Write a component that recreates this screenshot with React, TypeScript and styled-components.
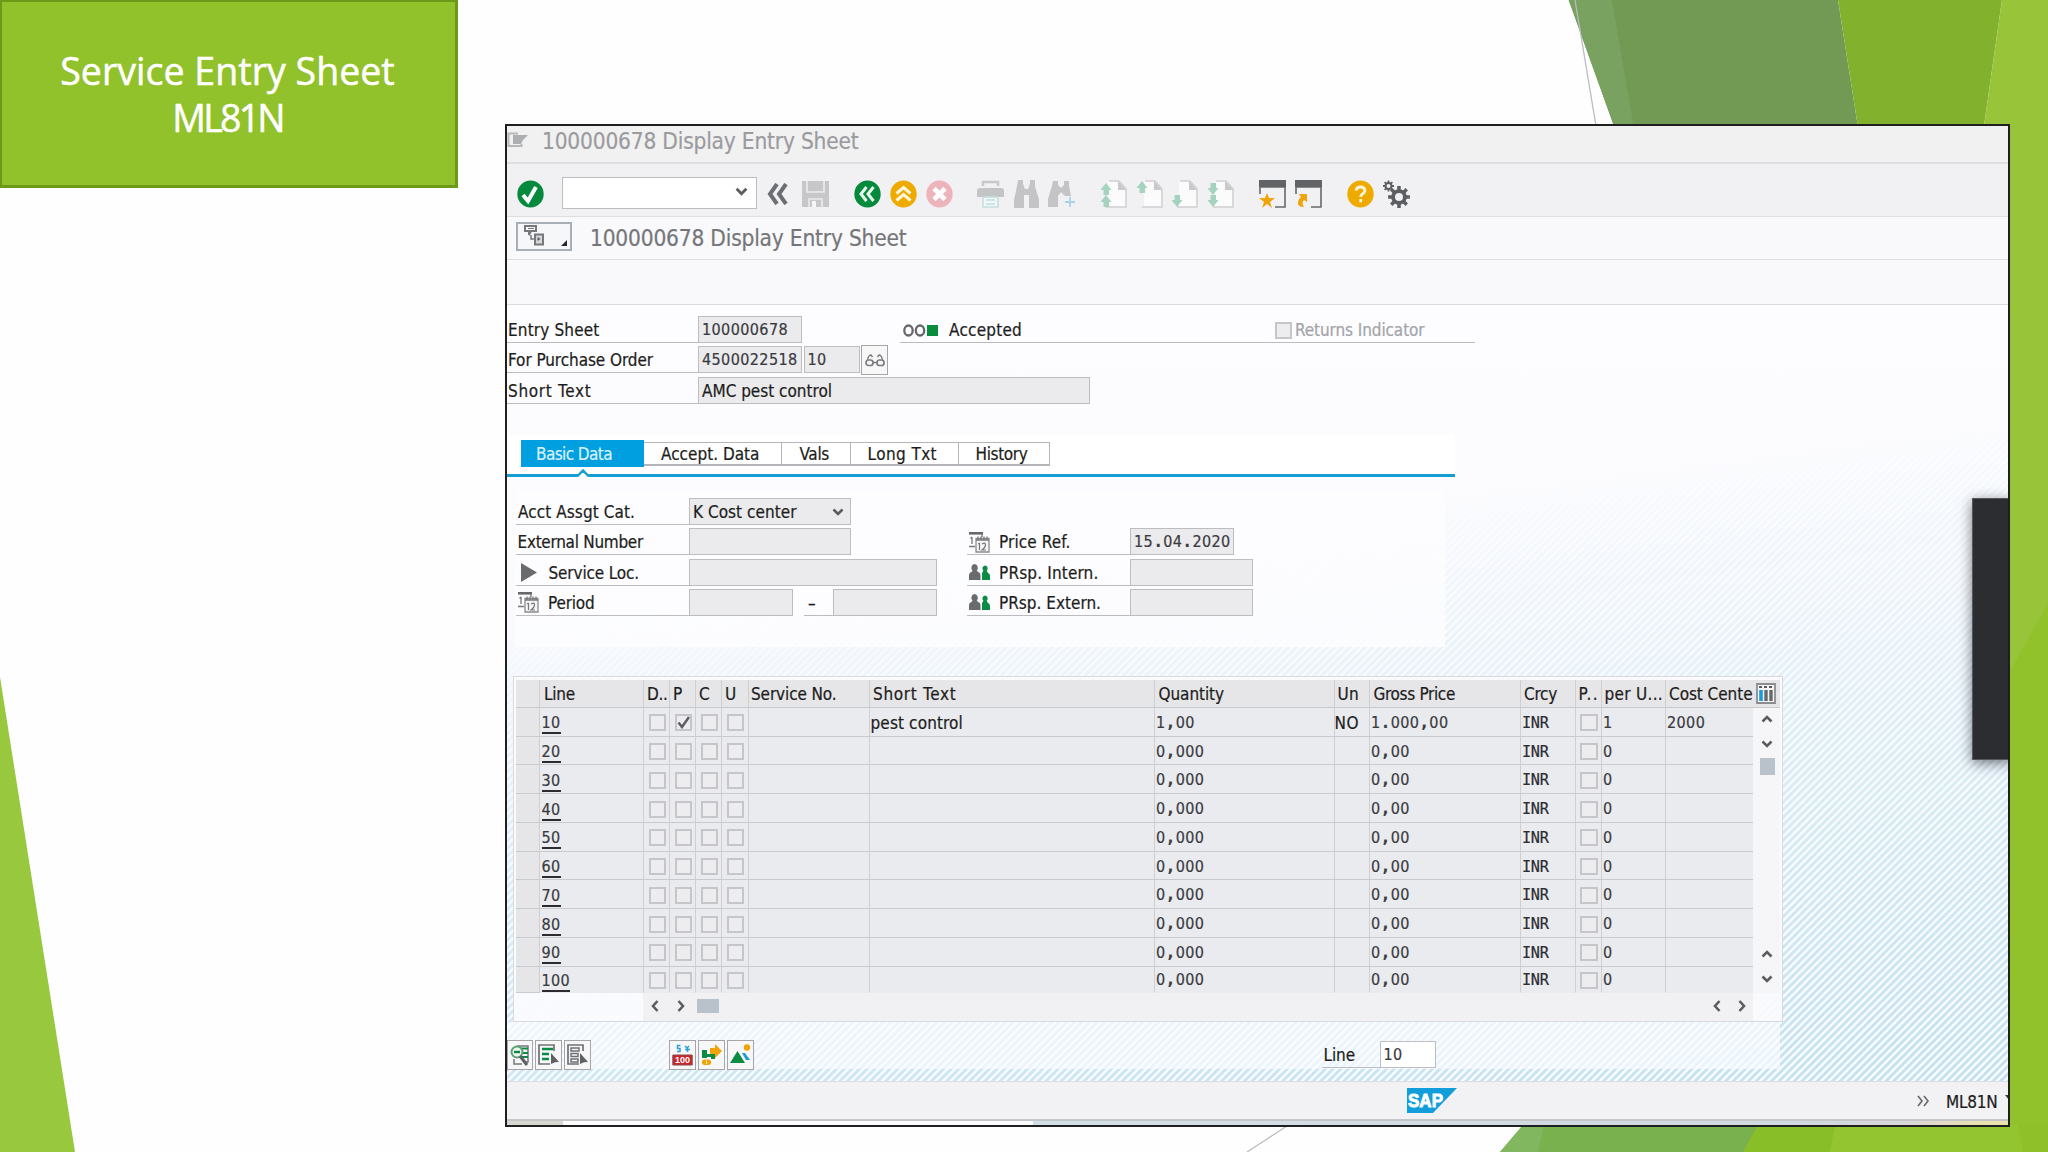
import React, { useLayoutEffect, useRef, useState } from 'react';
import styled, { createGlobalStyle, css } from 'styled-components';

const Global = createGlobalStyle`
  html, body { margin: 0; padding: 0; background: #fff; }
  *, *::before, *::after { box-sizing: border-box; }
`;

const sans = `'DejaVu Sans Condensed', 'DejaVu Sans', 'Noto Sans', sans-serif`;

/* ---------- slide ---------- */
const Slide = styled.main`
  position: relative;
  width: 2048px;
  height: 1152px;
  overflow: hidden;
  display: flex;
  align-items: flex-start;
  background: #fefefe;
  font-family: ${sans};
  font-stretch: condensed;
`;
const Backdrop = styled.svg`
  position: absolute;
  inset: 0;
`;
const Caption = styled.h1`
  position: relative;
  flex: none;
  width: 458px;
  height: 188px;
  margin: 0;
  padding: 2px 2px 0 0;
  display: flex;
  flex-direction: column;
  align-items: center;
  justify-content: center;
  background: #92c22b;
  border: solid #6b9a18;
  border-width: 2px 3px 3px 2px;
  color: #fff;
  font: 400 37.5px/46.5px 'Open Sans', 'Noto Sans', sans-serif;
  -webkit-text-stroke: 0.5px #fff;
`;

/* ---------- window ---------- */
const Window = styled.section`
  position: relative;
  flex: none;
  width: 1505px;
  height: 1003px;
  margin: 124px 0 0 47px;
  border: 2px solid #1f1f22;
  background: #f1f1f3;
  display: flex;
  flex-direction: column;
  overflow: hidden;
  color: #1d1d20;
  font-size: 17px;
  -webkit-text-stroke: 0.2px currentColor;
`;
const TitleBar = styled.header`
  flex: none;
  height: 38px;
  display: flex;
  align-items: flex-start;
  border-bottom: 2px solid #dededf;
  background: #f1f1f1;
  color: #9a9b9e;
  font-size: 22.5px;
  line-height: 30px;
`;
const MainTools = styled.nav`
  flex: none;
  height: 53px;
  display: flex;
  align-items: center;
  padding: 7px 0 0 10px;
  border-bottom: 1px solid #dfdfe2;
`;
const Tool = styled.span<{ $gap: number }>`
  display: flex;
  margin-left: ${p => p.$gap}px;
`;
const CommandBox = styled.div`
  width: 195px;
  height: 32px;
  margin: -2px 0 0 18px;
  padding: 0 8px 2px 0;
  display: flex;
  align-items: center;
  justify-content: flex-end;
  background: #fff;
  border: 1px solid #bdbdc2;
`;
const SubTitle = styled.div`
  flex: none;
  height: 43px;
  display: flex;
  align-items: flex-start;
  padding: 5px 0 0 9px;
  background: #f9f9fb;
  border-bottom: 1px solid #dedee1;
  color: #75767a;
  font-size: 22.5px;
  line-height: 32px;
`;
const MenuButton = styled.button`
  width: 56px;
  height: 29px;
  margin: 0 18px 0 0;
  padding: 3px 3px 3px 5px;
  display: flex;
  align-items: flex-end;
  justify-content: space-between;
  background: #f6f7f9;
  border: 2px solid #a9afb6;
`;
const AppTools = styled.div`
  flex: none;
  height: 45px;
  background: #f9f8fb;
  border-bottom: 1px solid #dcdce0;
`;
const Body = styled.div`
  position: relative;
  flex: none;
  height: 776px;
  display: flex;
  flex-direction: column;
  align-items: flex-start;
  background: linear-gradient(180deg, #fdfdff 0%, #fbfbfe 35%, #f5f9fd 60%, #eff6fc 100%);
  &::before {
    content: '';
    position: absolute;
    inset: 0;
    background: repeating-linear-gradient(135deg, #c5e1ef 0 2.2px, #fafdff 3px 4.6px, #c5e1ef 5.4px);
    mask-image: linear-gradient(172deg, transparent 32%, rgba(0, 0, 0, 0.45) 60%, #000 100%);
  }
  > * { position: relative; }
`;

/* ---------- form parts ---------- */
const EntryForm = styled.div`
  height: 130px;
  padding-top: 11px;
`;
const Row = styled.div`
  display: flex;
  align-items: flex-start;
  height: 27px;
  margin-bottom: 3.25px;
`;
const Label = styled.label<{ $w: number; $pad?: number }>`
  flex: none;
  width: ${p => p.$w}px;
  height: 27px;
  padding: 2px 0 0 ${p => p.$pad ?? 1}px;
  display: flex;
  align-items: center;
  border-bottom: 1.5px solid #bcbcc0;
  line-height: 26px;
`;
const Field = styled.div<{ $w: number; $white?: boolean; $gap?: number }>`
  flex: none;
  width: ${p => p.$w}px;
  height: 27px;
  margin-left: ${p => p.$gap ?? 0}px;
  padding: 1px 0 0 3px;
  display: flex;
  align-items: center;
  background: ${p => (p.$white ? '#fff' : '#ebebed')};
  border: 1.5px solid #bdbdc1;
  line-height: 24px;
`;
const IconButton = styled.button<{ $w?: number; $h?: number; $gap?: number }>`
  flex: none;
  width: ${p => p.$w ?? 27}px;
  height: ${p => p.$h ?? 30}px;
  margin: 0 0 0 ${p => p.$gap ?? 0}px;
  padding: 0;
  display: flex;
  align-items: center;
  justify-content: center;
  background: #f7f7f8;
  border: 1.5px solid #a5a5aa;
`;
const LensButton = styled(IconButton)`
  margin-top: -1.500px;
`;
const StatusLine = styled.div`
  width: 575px;
  height: 27px;
  margin-left: 98px;
  padding: 2px 0 0 3px;
  display: flex;
  align-items: center;
  border-bottom: 1.5px solid #bcbcc0;
`;
const Muted = styled.span`
  display: flex;
  align-items: center;
  gap: 3px;
  margin-left: 253px;
  color: #a3a4a8;
`;
const Check = styled.span<{ $s?: number }>`
  flex: none;
  width: ${p => p.$s ?? 17}px;
  height: 17px;
  display: flex;
  align-items: center;
  justify-content: center;
  border: 2px solid #c5c5ca;
  background: #ededf0;
`;
const TabStrip = styled.div`
  width: 948px;
  height: 42px;
  padding: 5px 0 0 14px;
  display: flex;
  align-items: flex-start;
  background: #fff;
  border-bottom: 3px solid #149ed6;
`;
const Notch = styled.svg`
  position: absolute;
  left: 69px;
  bottom: -3px;
`;
const Tab = styled.div<{ $w: number; $pad: number; $active?: boolean }>`
  width: ${p => p.$w}px;
  padding-left: ${p => p.$pad}px;
  ${p =>
    p.$active
      ? css`
          height: 27px;
          line-height: 28px;
          background: #009fe0;
          color: #d9f1fb;
        `
      : css`
          height: 24px;
          margin-top: 2px;
          line-height: 23px;
          background: #fff;
          border: solid #b4b4b9;
          border-width: 1px 1px 2px 0;
        `}
`;
const Panel = styled.div`
  width: 930px;
  height: 157px;
  margin: 13px 0 0 8px;
  padding: 8px 0 0 1px;
  display: flex;
  background: rgba(253, 253, 255, 0.86);
`;
const Column = styled.div<{ $gap?: number; $top?: number }>`
  margin-left: ${p => p.$gap ?? 0}px;
  padding-top: ${p => p.$top ?? 0}px;
`;
const IconSlot = styled.span<{ $w: number }>`
  flex: none;
  display: flex;
  width: ${p => p.$w}px;
`;
const Spread = styled.span<{ $w: number }>`
  width: ${p => p.$w}px;
`;

/* ---------- table ---------- */
const TableBox = styled.div`
  width: 1270px;
  height: 346px;
  margin: 29px 0 0 6px;
  padding: 3px 2px 0 2px;
  background: rgba(251, 251, 253, 0.92);
  border: 1px solid #dadade;
`;
const columns = '24px 104px 26px 26px 26px 26.5px 121.5px 285px 179.5px 35.5px 151px 54.5px 26.5px 64px 87.5px';
const TableMain = styled.div`
  display: flex;
  height: 313px;
`;
const Grid = styled.div`
  width: 1237px;
`;
const Line = styled.div<{ $head?: boolean; $last?: boolean }>`
  display: grid;
  grid-template-columns: ${columns};
  height: ${p => (p.$head ? 27.9 : p.$last ? 26.25 : 28.76)}px;
  background: ${p => (p.$head ? '#e6e5e7' : '#e9ebef')};
  line-height: 28px;
`;
const Cell = styled.div<{ $pad?: number; $shade?: boolean; $last?: boolean; $clip?: boolean }>`
  min-width: 0;
  padding: 2px 0 0 ${p => p.$pad ?? 1}px;
  display: flex;
  align-items: center;
  overflow: hidden;
  white-space: nowrap;
  border-right: 1.5px solid ${p => (p.$clip ? 'transparent' : '#cfcfd3')};
  border-bottom: 1px solid ${p => (p.$last ? 'transparent' : '#c9cacd')};
  background: ${p => (p.$shade ? '#e6e5e7' : 'transparent')};
`;
const Underlined = styled.span`
  height: 23px;
  line-height: 22px;
  border-bottom: 2px solid #2c2c30;
`;
const Rail = styled.div`
  width: 27px;
  display: flex;
  flex-direction: column;
  align-items: center;
  background: #f6f6f8;
`;
const RailHead = styled.div`
  width: 27px;
  height: 27.9px;
  padding: 3px 0 0 3px;
  background: #e6e5e7;
  border-bottom: 1px solid #c9cacd;
`;
const Thumb = styled.div<{ $w: number; $h: number; $gap?: number }>`
  width: ${p => p.$w}px;
  height: ${p => p.$h}px;
  margin-left: ${p => p.$gap ?? 0}px;
  background: #b9c2cb;
`;
const Stack = styled.div<{ $top: number }>`
  display: flex;
  flex-direction: column;
  align-items: center;
  gap: 13.5px;
  padding-top: ${p => p.$top}px;
`;
const HScroll = styled.div`
  display: flex;
  align-items: center;
  gap: 13.5px;
  width: 1110px;
  height: 28px;
  margin-left: 127px;
  padding: 0 5px 2px 6px;
  background: #f1f1f3;
`;
const Filler = styled.span`
  flex: 1;
`;

/* ---------- bottom ---------- */
const FootTools = styled.div`
  width: 1273px;
  height: 47px;
  padding-top: 17.500px;
  display: flex;
  align-items: flex-start;
  gap: 2px;
  background: rgba(250, 252, 255, 0.68);
`;
const LineEntry = styled.div`
  display: flex;
  margin: 1px 0 0 566px;
`;
const StatusBar = styled.footer`
  flex: none;
  height: 38px;
  display: flex;
  align-items: center;
  padding: 0 0 0 899.500px;
  border-top: 1px solid #dcdde0;
  background: #f2f1f3;
`;
const StatusText = styled.span`
  padding-top: 2px;
`;
const Divider = styled.span`
  width: 2px;
  height: 17px;
  margin: 0 8px 0 9px;
  background: #c6c6ca;
`;
const TaskStrip = styled.div`
  flex: 1;
  display: flex;
  border-top: 2px solid #c5c6c9;
`;
const TaskPart = styled.span<{ $w?: number; $bg: string }>`
  ${p => (p.$w ? `width: ${p.$w}px;` : 'flex: 1;')}
  background: ${p => p.$bg};
`;
const SideHandle = styled.div`
  position: absolute;
  left: 1465px;
  top: 372px;
  width: 40px;
  height: 262px;
  background: #2b2d31;
  border: 1px solid #55575b;
  box-shadow: 0 3px 12px rgba(30, 32, 40, 0.6);
`;

/* Tracks the text so that it spans the given width. */
const Tracked = styled.span`
  display: inline-block;
  white-space: pre;
`;
function Txt({ w, children }: { w: number; children: string }) {
  const ref = useRef<HTMLSpanElement>(null);
  const [track, setTrack] = useState(0);
  useLayoutEffect(() => {
    if (ref.current) setTrack((w + 1.5 - ref.current.getBoundingClientRect().width) / children.length);
  }, [w, children]);
  return (
    <Tracked ref={ref} style={{ letterSpacing: track }}>
      {children}
    </Tracked>
  );
}

/* Fixed-pitch figures: punctuation is padded to the digit width. */
const Figures = styled.span`
  font-size: 16px;
  letter-spacing: 0.4px;
  color: #3a3a40;
  white-space: pre;
`;
const Point = styled.span`
  padding: 0 2.3px;
  font-weight: 700;
  letter-spacing: 0;
`;
const Code = styled.span`
  font-family: 'DejaVu Sans Mono', monospace;
  font-size: 15.2px;
  letter-spacing: -0.3px;
  color: #2b2b30;
`;
function Num({ children }: { children: string }) {
  return (
    <Figures>
      {children.split(/([.,])/).map((s, i) => (s === '.' || s === ',' ? <Point key={i}>{s}</Point> : s))}
    </Figures>
  );
}

/* ---------- icons ---------- */
function Chevron({ dir, s = 12 }: { dir: 'up' | 'down' | 'left' | 'right'; s?: number }) {
  const d = {
    up: 'M1.5 8.5L6 4l4.500 4.500',
    down: 'M1.5 3.500L6 8l4.500-4.500',
    left: 'M8.500 1L4 6l4.500 5',
    right: 'M3.500 1L8 6l-4.500 5',
  }[dir];
  return (
    <svg width={s} height={s} viewBox="0 0 12 12">
      <path d={d} fill="none" stroke="#5b5c60" strokeWidth="2.600" />
    </svg>
  );
}
function Disc({ fill, children }: { fill: string; children: React.ReactNode }) {
  return (
    <svg width="27" height="28" viewBox="0 0 27 28">
      <ellipse cx="13.5" cy="14" rx="13.2" ry="13.6" fill={fill} />
      {children}
    </svg>
  );
}
const Printer = () => (
  <svg width="27" height="28" viewBox="0 0 27 28" fill="none">
    <path d="M6 6V2h15v4" stroke="#c8c8ca" strokeWidth="2.500" />
    <path d="M3 8h21q3 0 3 3v6H0v-6q0-3 3-3z" fill="#c4c4c6" />
    <path d="M6 17h15v10H6z" fill="#f3f6f6" stroke="#c2dedd" strokeWidth="1.500" />
    <path d="M9 20h9M9 24h9" stroke="#bfe0e4" strokeWidth="1.600" />
  </svg>
);
const Binoculars = ({ plus }: { plus?: boolean }) => (
  <svg width="27" height="28" viewBox="0 0 27 28">
    <path
      d={
        plus
          ? 'M5 1h5v4l3 3 3-3V1h5v5l2 10h-6l-4-4-3 4v11H0V19L4 6z'
          : 'M4 0h5v4l2 5h3l2-5V0h5v6l4 14v8H15V15h-5v13H0v-8L3 6z'
      }
      fill="#c4c4c7"
    />
    {plus && <path d="M22 17v10M17 22h10" stroke="#a9d3ec" strokeWidth="1.800" />}
  </svg>
);
const Sheet = ({ arrows }: { arrows: string }) => (
  <svg width="26" height="28" viewBox="0 0 26 28">
    <path d="M7 1h11l7 8v18H7z" fill="#fbfbfc" />
    <path d="M8 1h10l7 8v18H5" fill="none" stroke="#cfcfd2" strokeWidth="1.500" />
    <path d="M17 1v9h8z" fill="#c9c9cc" />
    <path d={arrows} fill="#a5d3bf" />
  </svg>
);
const upArrow = (y: number) => `M5 ${y}l5.500 7H8v5H2.500v-5H-.5z`;
const downArrow = (y: number) => `M5 ${y + 12}l5.500-7H8V${y}H2.500v5H-.5z`;
const Frame = ({ children }: { children: React.ReactNode }) => (
  <svg width="27" height="28" viewBox="0 0 27 28">
    <path d="M1 7h25v20H16M1 7v7" fill="none" stroke="#66686b" strokeWidth="1.600" />
    <path d="M0 0h27v7H0z" fill="#616366" />
    {children}
  </svg>
);
const Calendar = () => (
  <svg width="21" height="21" viewBox="0 0 21 21" fill="none">
    <path d="M0 1.300h14" stroke="#67686b" strokeWidth="2.600" />
    <path d="M13 2v3M0 14.500h6M3 5v7M1.500 6.500L3 5" stroke="#77787b" strokeWidth="1.300" />
    <path d="M7 6.500h13V20H7z" fill="#f5f5f6" stroke="#8a8b8e" strokeWidth="1.300" />
    <path d="M7 8h13M9 4.500v3M12 4.500v3M15 4.500v3M18 4.500v3" stroke="#77787b" strokeWidth="1.300" />
    <path d="M10.500 11v7M9.200 12l1.300-1M13 12q3.500-2 3.500.7T13 18h4" stroke="#77787b" strokeWidth="1.200" />
  </svg>
);
const People = () => (
  <svg width="21" height="18" viewBox="0 0 21 18">
    <path d="M5.500 0a3.600 3.600 0 0 1 2.200 6.200L9 8q2.500 .5 2.500 3v5H0v-5q0-2.500 2.500-3l1-1.800A3.600 3.600 0 0 1 5.500 0z" fill="#6a6b6e" />
    <path d="M16 1.500a3 3 0 0 1 1.700 5.200L19 9q2 .5 2 3v4h-8v-7l1.400-2.300A3 3 0 0 1 16 1.500z" fill="#0a8c45" />
  </svg>
);
const Gear = ({ cx, cy, r, hole }: { cx: number; cy: number; r: number; hole: number }) => (
  <g stroke="#5c5e61" fill="none">
    <circle cx={cx} cy={cy} r={(r + hole) / 2} strokeWidth={r - hole} />
    {[0, 45, 90, 135].map(a => (
      <path
        key={a}
        d={`M${cx} ${cy - r - r * 0.4}v${r * 0.7}M${cx} ${cy + r + r * 0.4}v${-r * 0.7}`}
        strokeWidth={r * 0.45}
        transform={`rotate(${a} ${cx} ${cy})`}
      />
    ))}
  </g>
);
const DocPick = ({ green }: { green?: boolean }) => (
  <svg width="21" height="22" viewBox="0 0 21 22" fill="none">
    <path d="M16 7V1H1v19h11" stroke="#707175" strokeWidth="1.700" />
    {green ? (
      <path d="M4 5h11M4 10h7M4 15h7" stroke="#0a8c45" strokeWidth="2.500" />
    ) : (
      <path d="M4 4h8v3H4zM4 9.500h7v3H4zM4 15h7v3H4z" stroke="#707175" strokeWidth="1.500" />
    )}
    <path d="M13 9l8 9-4 .2L13 20z" fill="#5f6064" />
  </svg>
);

const lines = [10, 20, 30, 40, 50, 60, 70, 80, 90, 100];

export default function App() {
  return (
    <Slide>
      <Global />
      <Backdrop width="2048" height="1152" viewBox="0 0 2048 1152">
        <path d="M1568.700 0H1838L1860 140H1619z" fill="#739a54" />
        <path d="M1568.700 0H1612L1636 140H1619z" fill="#79a15f" />
        <path d="M1838 0H2002L1982 140H1860z" fill="#82b22d" />
        <path d="M2002 0H2048V700H1990L1982 140z" fill="#98c43a" />
        <path d="M2048 603V1152H1990V707z" fill="#92c22b" />
        <path d="M1500 1152L1523 1125H1770V1152z" fill="#7ab14f" />
        <path d="M1500 1152L1523 1125H1544L1538 1152z" fill="#80b75f" />
        <path d="M1743 1152L1758 1125H2048V1152z" fill="#88bf28" />
        <path d="M1830 1152L1835 1125H2048V1152z" fill="#93c530" />
        <path d="M2018 1125H2048V1152H2023z" fill="#8fc029" />
        <path d="M1575 0L1596 126M1287 1126L1247 1152" stroke="#b9bcc0" strokeWidth="1.300" />
        <path d="M0 677L75 1152H0z" fill="#98c83e" />
      </Backdrop>
      <Caption>
        <Txt w={333}>Service Entry Sheet</Txt>
        <Txt w={109}>ML81N</Txt>
      </Caption>

      <Window>
        <TitleBar>
          <Tool $gap={0}>
            <svg width="35" height="31" viewBox="0 0 35 31">
              <path d="M11 7.500H1.500v12.500h13v-2" fill="none" stroke="#b7b8ba" strokeWidth="2" />
              <path d="M6 9h15l-5 5-2 4H6z" fill="#aeafb2" />
            </svg>
          </Tool>
          <Txt w={315}>100000678 Display Entry Sheet</Txt>
        </TitleBar>

        <MainTools>
          <Tool $gap={0}>
            <Disc fill="#058a3d">
              <path d="M6 15l5 6 8-14" fill="none" stroke="#fff" strokeWidth="4" />
            </Disc>
          </Tool>
          <CommandBox>
            <Chevron dir="down" s={13} />
          </CommandBox>
          <Tool $gap={10}>
            <svg width="21" height="22" viewBox="0 0 21 22">
              <path d="M10 1L3 11l7 10M19 1l-7 10 7 10" fill="none" stroke="#6c6e72" strokeWidth="4" />
            </svg>
          </Tool>
          <Tool $gap={14}>
            <svg width="27" height="28" viewBox="0 0 27 28">
              <path d="M0 1h27v26H0z" fill="#c7c7c9" />
              <path d="M5 1v11h17V1M7 27v-8h13v8" fill="none" stroke="#ececed" strokeWidth="1.600" />
              <path d="M10 21h4v6h-4z" fill="#f6f6f6" />
            </svg>
          </Tool>
          <Tool $gap={25.300}>
            <Disc fill="#058a3d">
              <path d="M12.500 7L7 14l5.500 7M19.500 7L14 14l5.500 7" fill="none" stroke="#e8f6ec" strokeWidth="3" />
            </Disc>
          </Tool>
          <Tool $gap={8.600}>
            <Disc fill="#efaa00">
              <path d="M6.500 13.500l7-6 7 6M6.500 20.500l7-6 7 6" fill="none" stroke="#fff6dc" strokeWidth="3" />
            </Disc>
          </Tool>
          <Tool $gap={8.800}>
            <Disc fill="#ecb4ba">
              <path d="M8 8.500l11 11M19 8.500l-11 11" stroke="#fff" strokeWidth="4.600" />
            </Disc>
          </Tool>
          <Tool $gap={24.500}>
            <Printer />
          </Tool>
          <Tool $gap={10}>
            <Binoculars />
          </Tool>
          <Tool $gap={7}>
            <Binoculars plus />
          </Tool>
          <Tool $gap={26.200}>
            <Sheet arrows={upArrow(3) + upArrow(15)} />
          </Tool>
          <Tool $gap={10}>
            <Sheet arrows={upArrow(1)} />
          </Tool>
          <Tool $gap={8.700}>
            <Sheet arrows={downArrow(15)} />
          </Tool>
          <Tool $gap={10.300}>
            <Sheet arrows={downArrow(3) + downArrow(15)} />
          </Tool>
          <Tool $gap={25}>
            <Frame>
              <path d="M8 13l2 5h6l-5 4 2 6-5-4-5 4 2-6-5-4h6z" fill="#efa50a" />
            </Frame>
          </Tool>
          <Tool $gap={8.700}>
            <Frame>
              <path d="M4 14h8v8l-3-2q-3 3 0 7-7 0-6-5 0-3 3-5z" fill="#efa50a" />
            </Frame>
          </Tool>
          <Tool $gap={25}>
            <Disc fill="#efaa00">
              <path d="M9 10.500Q9.500 7 13.500 7t4.500 3.500q0 2-2.500 3.500-1.800 1-1.800 3M13.700 19v3.200" fill="none" stroke="#fff6dc" strokeWidth="2.800" />
            </Disc>
          </Tool>
          <Tool $gap={8.500}>
            <svg width="27" height="28" viewBox="0 0 27 28">
              <Gear cx={5.5} cy={6} r={3.9} hole={2} />
              <Gear cx={16} cy={17} r={7.8} hole={4} />
            </svg>
          </Tool>
        </MainTools>

        <SubTitle>
          <MenuButton>
            <svg width="22" height="22" viewBox="0 0 22 22" fill="none">
              <path d="M2 2h11v5H8l-2 4V7H2z" stroke="#76787c" strokeWidth="2" />
              <path d="M5 4.500h6" stroke="#76787c" />
              <path d="M8 11v4h3" stroke="#76787c" strokeWidth="1.500" />
              <path d="M12 10.500h8v10h-8z" fill="#d5d6d8" stroke="#76787c" strokeWidth="2" />
              <path d="M14.500 13l3 2-3 2z" fill="#5b5c60" />
            </svg>
            <svg width="6" height="6" viewBox="0 0 6 6">
              <path d="M6 0v6H0z" fill="#26272a" />
            </svg>
          </MenuButton>
          <Txt w={315}>100000678 Display Entry Sheet</Txt>
        </SubTitle>
        <AppTools />

        <Body>
          <EntryForm>
            <Row>
              <Label $w={191}><Txt w={90}>Entry Sheet</Txt></Label>
              <Field $w={104}><Num>100000678</Num></Field>
              <StatusLine>
                <IconSlot $w={46}>
                  <svg width="36" height="13" viewBox="0 0 36 13">
                    <ellipse cx="5.500" cy="6.500" rx="4.200" ry="5" fill="none" stroke="#66686b" strokeWidth="2.300" />
                    <ellipse cx="17" cy="6.500" rx="4.200" ry="5" fill="none" stroke="#66686b" strokeWidth="2.300" />
                    <path d="M24 1H35v11H24z" fill="#0a8c3f" />
                  </svg>
                </IconSlot>
                <Txt w={71.5}>Accepted</Txt>
                <Muted>
                  <Check $s={17} />
                  <Txt w={128}>Returns Indicator</Txt>
                </Muted>
              </StatusLine>
            </Row>
            <Row>
              <Label $w={191}><Txt w={143.5}>For Purchase Order</Txt></Label>
              <Field $w={104}><Num>4500022518</Num></Field>
              <Field $w={56} $gap={1.5}><Num>10</Num></Field>
              <LensButton $gap={1.500}>
                <svg width="20" height="16" viewBox="0 0 20 16" fill="none" stroke="#7a7b7f" strokeWidth="1.700">
                  <rect x="1" y="8" width="7" height="5.500" rx="2.500" />
                  <rect x="12" y="8" width="7" height="5.500" rx="2.500" />
                  <path d="M8 10.500h4M2.500 8q1-5 3.500-5l1.500 2M17.500 8q-1-5-3.500-5l-1.500 2" strokeWidth="1.300" />
                </svg>
              </LensButton>
            </Row>
            <Row>
              <Label $w={191}><Txt w={82}>Short Text</Txt></Label>
              <Field $w={392}><Txt w={128.5}>AMC pest control</Txt></Field>
            </Row>
          </EntryForm>

          <TabStrip>
            <Tab $w={123} $pad={15} $active><Txt w={74.5}>Basic Data</Txt></Tab>
            <Tab $w={138} $pad={17}><Txt w={97}>Accept. Data</Txt></Tab>
            <Tab $w={69} $pad={17.500}><Txt w={28}>Vals</Txt></Tab>
            <Tab $w={107.5} $pad={16.500}><Txt w={68}>Long Txt</Txt></Tab>
            <Tab $w={91.5} $pad={17}><Txt w={50.5}>History</Txt></Tab>
            <Notch width="14" height="8" viewBox="0 0 14 8">
              <path d="M1 8l6-6 6 6z" fill="#fff" />
              <path d="M0 6.500h2L7 1.500l5 5h2" fill="none" stroke="#149ed6" strokeWidth="2.400" />
            </Notch>
          </TabStrip>

          <Panel>
            <Column>
              <Row>
                <Label $w={173} $pad={2}><Txt w={115.5}>Acct Assgt Cat.</Txt></Label>
                <Field $w={161.5}>
                  <Spread $w={139}><Txt w={102}>K Cost center</Txt></Spread>
                  <Chevron dir="down" />
                </Field>
              </Row>
              <Row>
                <Label $w={173} $pad={1.500}><Txt w={124}>External Number</Txt></Label>
                <Field $w={161.5} />
              </Row>
              <Row>
                <Label $w={173} $pad={4.500}>
                  <IconSlot $w={28}>
                    <svg width="16" height="19" viewBox="0 0 16 19"><path d="M0 0l16 9.500L0 19z" fill="#6a6b6e" /></svg>
                  </IconSlot>
                  <Txt w={89}>Service Loc.</Txt>
                </Label>
                <Field $w={248} />
              </Row>
              <Row>
                <Label $w={173} $pad={2}>
                  <IconSlot $w={30}><Calendar /></IconSlot>
                  <Txt w={45}>Period</Txt>
                </Label>
                <Field $w={104} />
                <Column $gap={10.500}><Label $w={29} $pad={4.500}><Txt w={8}>–</Txt></Label></Column>
                <Field $w={104} />
              </Row>
            </Column>
            <Column $gap={29.500} $top={30.25}>
              <Row>
                <Label $w={163.500} $pad={2.5}>
                  <IconSlot $w={30}><Calendar /></IconSlot>
                  <Txt w={70}>Price Ref.</Txt>
                </Label>
                <Field $w={104}><Num>15.04.2020</Num></Field>
              </Row>
              <Row>
                <Label $w={163.500} $pad={2.5}>
                  <IconSlot $w={30}><People /></IconSlot>
                  <Txt w={98}>PRsp. Intern.</Txt>
                </Label>
                <Field $w={123} />
              </Row>
              <Row>
                <Label $w={163.500} $pad={2.5}>
                  <IconSlot $w={30}><People /></IconSlot>
                  <Txt w={100.500}>PRsp. Extern.</Txt>
                </Label>
                <Field $w={123} />
              </Row>
            </Column>
          </Panel>

          <TableBox>
            <TableMain>
              <Grid>
                <Line $head>
                  <Cell />
                  <Cell $pad={4}><Txt w={29.500}>Line</Txt></Cell>
                  <Cell $pad={3}><Txt w={19}>D..</Txt></Cell>
                  <Cell $pad={3}><Txt w={9}>P</Txt></Cell>
                  <Cell $pad={3}><Txt w={10}>C</Txt></Cell>
                  <Cell $pad={3}><Txt w={10}>U</Txt></Cell>
                  <Cell $pad={2.500}><Txt w={84}>Service No.</Txt></Cell>
                  <Cell $pad={3}><Txt w={82}>Short Text</Txt></Cell>
                  <Cell $pad={3.500}><Txt w={64}>Quantity</Txt></Cell>
                  <Cell $pad={3}><Txt w={20}>Un</Txt></Cell>
                  <Cell $pad={3.500}><Txt w={80}>Gross Price</Txt></Cell>
                  <Cell $pad={3}><Txt w={31.500}>Crcy</Txt></Cell>
                  <Cell $pad={3}><Txt w={19}>P..</Txt></Cell>
                  <Cell $pad={2.500}><Txt w={57}>per U...</Txt></Cell>
                  <Cell $pad={3} $clip><Txt w={82}>Cost Cente</Txt></Cell>
                </Line>
                {lines.map((n, i) => {
                  const last = i === lines.length - 1;
                  const first = i === 0;
                  return (
                    <Line key={n} $last={last}>
                      <Cell $shade />
                      <Cell $pad={1.500} $last={last}><Underlined><Num>{String(n)}</Num></Underlined></Cell>
                      {[0, 1, 2, 3].map(c => (
                        <Cell key={c} $pad={4.500} $last={last}>
                          <Check>
                            {first && c === 1 && (
                              <svg width="13" height="13" viewBox="0 0 13 13">
                                <path d="M1.500 6.500L5 11l7-10" fill="none" stroke="#5c5d61" strokeWidth="2.500" />
                              </svg>
                            )}
                          </Check>
                        </Cell>
                      ))}
                      <Cell $last={last} />
                      <Cell $pad={0.500} $last={last}>{first && <Txt w={91}>pest control</Txt>}</Cell>
                      <Cell $last={last}><Num>{first ? '1,00' : '0,000'}</Num></Cell>
                      <Cell $pad={0} $last={last}>{first && <Txt w={23}>NO</Txt>}</Cell>
                      <Cell $last={last}><Num>{first ? '1.000,00' : '0,00'}</Num></Cell>
                      <Cell $last={last}><Code>INR</Code></Cell>
                      <Cell $pad={4.500} $last={last}><Check $s={18} /></Cell>
                      <Cell $last={last}><Num>{first ? '1' : '0'}</Num></Cell>
                      <Cell $last={last} $clip>{first && <Num>2000</Num>}</Cell>
                    </Line>
                  );
                })}
              </Grid>
              <Rail>
                <RailHead>
                  <svg width="20" height="21" viewBox="0 0 20 21">
                    <path d="M1 1h18v19H1z" fill="#f4f4f5" stroke="#8b8c90" strokeWidth="1.800" />
                    <path d="M3 4h3M8 4h3M13 4h3" stroke="#5b5c60" strokeWidth="2" />
                    <path d="M5 7v11" stroke="#1a9bdc" strokeWidth="3.600" />
                    <path d="M10 7v11M15 7v11" stroke="#66686b" strokeWidth="3.400" />
                  </svg>
                </RailHead>
                <Stack $top={5}>
                  <Chevron dir="up" />
                  <Chevron dir="down" />
                </Stack>
                <Stack $top={8}><Thumb $w={15} $h={17} $gap={1} /></Stack>
                <Stack $top={172.500}>
                  <Chevron dir="up" />
                  <Chevron dir="down" />
                </Stack>
              </Rail>
            </TableMain>
            <HScroll>
              <Chevron dir="left" />
              <Chevron dir="right" />
              <Thumb $w={22} $h={14} $gap={-3} />
              <Filler />
              <Chevron dir="left" />
              <Chevron dir="right" />
            </HScroll>
          </TableBox>

          <FootTools>
            <IconButton $w={26}>
              <svg width="21" height="22" viewBox="0 0 21 22" fill="none">
                <path d="M7 2h11v16h-4" stroke="#77787c" strokeWidth="1.500" />
                <path d="M9 4.500h9M12 9h6M12 13h6" stroke="#0a8c45" strokeWidth="2.200" />
                <circle cx="7" cy="8" r="5.500" fill="#eef5f0" stroke="#5f9f78" strokeWidth="2" />
                <path d="M4 8h6" stroke="#0a8c45" strokeWidth="2.400" />
                <path d="M10 12l7 9" stroke="#5f6064" strokeWidth="3" />
                <path d="M4 15v5h8" stroke="#77787c" strokeWidth="1.500" />
              </svg>
            </IconButton>
            <IconButton><DocPick green /></IconButton>
            <IconButton><DocPick /></IconButton>
            <IconButton $gap={76}>
              <svg width="21" height="22" viewBox="0 0 21 22">
                <path d="M8.500 1.500H5.500v3h2.500v3H5M13 2l2 2 2-2M13 5.500h5M15.500 4v4" fill="none" stroke="#2d9fd8" strokeWidth="1.500" />
                <path d="M.8 11h19.400v10H.8z" fill="#c9252d" stroke="#8a4a4e" />
                <text x="10.500" y="19.300" textAnchor="middle" fontFamily="Liberation Sans, sans-serif" fontWeight="700" fontSize="9" fill="#fff">100</text>
              </svg>
            </IconButton>
            <IconButton>
              <svg width="21" height="22" viewBox="0 0 21 22">
                <path d="M1 6h5v4h5V8h3v7h-4v-2H6v1H1z" fill="#0a8c45" />
                <path d="M9 4h5V0l7 7-7 7v-4H9z" fill="#efa50a" />
                <rect x="1" y="15.500" width="9" height="5.500" rx="2.500" fill="#efa50a" />
                <path d="M5.500 16.500v3.500" stroke="#fbe6b5" />
              </svg>
            </IconButton>
            <IconButton>
              <svg width="21" height="22" viewBox="0 0 21 22">
                <circle cx="17" cy="3.500" r="3.200" fill="#efa50a" />
                <path d="M7.500 7L15 19H0z" fill="#0a8c45" />
                <path d="M12 9h3l5 7h-4z" fill="#1a9bdc" />
              </svg>
            </IconButton>
            <LineEntry>
              <Label $w={57.500} $pad={1.500}><Txt w={30}>Line</Txt></Label>
              <Field $w={56} $white><Num>10</Num></Field>
            </LineEntry>
          </FootTools>
        </Body>

        <StatusBar>
          <Tool $gap={0}>
            <svg width="50" height="25" viewBox="0 0 50 25">
              <path d="M0 0h50L26 25H0z" fill="#129edb" />
              <text x="1" y="18.500" fontFamily="Liberation Sans, sans-serif" fontWeight="700" fontSize="19" textLength="35" lengthAdjust="spacingAndGlyphs" fill="#fff" stroke="#fff" strokeWidth=".9">SAP</text>
            </svg>
          </Tool>
          <Tool $gap={460.500}>
            <svg width="12" height="12" viewBox="0 0 12 12">
              <path d="M1 1l4 5-4 5M7 1l4 5-4 5" fill="none" stroke="#6a6b6f" strokeWidth="1.700" />
            </svg>
          </Tool>
          <Divider />
          <StatusText><Txt w={50}>ML81N</Txt></StatusText>
          <Tool $gap={7}>
            <svg width="8" height="12" viewBox="0 0 8 12"><path d="M0 0h8L4 5z" fill="#3b3c40" /></svg>
          </Tool>
        </StatusBar>
        <TaskStrip>
          <TaskPart $w={56} $bg="#d6d7cf" />
          <TaskPart $w={470} $bg="#fcfcfd" />
          <TaskPart $bg="linear-gradient(90deg, #d3dfe6 0%, #cfd9df 78%, #d9d6d8 90%, #e9e2ae 97%)" />
        </TaskStrip>
        <SideHandle />
      </Window>
    </Slide>
  );
}
